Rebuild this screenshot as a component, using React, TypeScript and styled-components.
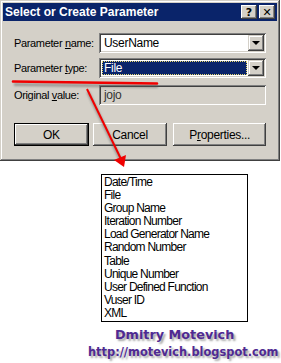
import React from "react";
import styled, { createGlobalStyle } from "styled-components";

const GlobalStyle = createGlobalStyle`
  html, body { margin: 0; padding: 0; background: #ffffff; }
  body { width: 281px; height: 363px; overflow: hidden; }
`;

const FONT = `"Liberation Sans", Arial, sans-serif`;

const Page = styled.div`
  position: relative;
  width: 281px;
  height: 363px;
  font-family: ${FONT};
`;

const Dialog = styled.div`
  box-sizing: border-box;
  width: 280px;
  height: 161px;
  padding: 3px;
  background: #d4d0c8;
  box-shadow: inset -1px -1px #404040, inset 1px 1px #d4d0c8,
    inset -2px -2px #808080, inset 2px 2px #ffffff;
`;

const TitleBar = styled.div`
  height: 18px;
  background: #0a246a;
  display: flex;
  align-items: center;
  justify-content: space-between;
  padding: 0 2px 0 2px;
`;

const Title = styled.span`
  color: #ffffff;
  font-family: ${FONT};
  font-weight: bold;
  font-size: 12px;
`;

const CaptionButtons = styled.div`
  display: flex;
  gap: 2px;
`;

const CaptionButton = styled.div`
  box-sizing: border-box;
  width: 16px;
  height: 14px;
  background: #d4d0c8;
  box-shadow: inset -1px -1px #404040, inset 1px 1px #ffffff,
    inset -2px -2px #808080;
  display: flex;
  align-items: center;
  justify-content: center;
  color: #000;
  font-family: "DejaVu Sans", sans-serif;
  font-weight: bold;
  font-size: 11px;
  line-height: 1;
`;

const Body = styled.div`
  padding: 12px 11px 0 11px;
  display: flex;
  flex-direction: column;
`;

const Row = styled.div<{ $mt: number }>`
  display: grid;
  grid-template-columns: 85px 167px;
  align-items: center;
  margin-top: ${(p) => p.$mt}px;
`;

const Label = styled.span`
  font-size: 11px;
  letter-spacing: -0.35px;
  color: #000;
`;

const Combo = styled.div`
  box-sizing: border-box;
  height: 20px;
  background: #ffffff;
  box-shadow: inset 1px 1px #808080, inset -1px -1px #ffffff,
    inset 2px 2px #404040, inset -2px -2px #d4d0c8;
  display: flex;
  align-items: stretch;
  padding: 2px;
`;

const ComboText = styled.div<{ $selected?: boolean }>`
  flex: 1;
  display: flex;
  align-items: center;
  margin: 1px 1px 1px 1px;
  padding-left: 2px;
  font-size: 12px;
  letter-spacing: -0.3px;
  color: ${(p) => (p.$selected ? "#ffffff" : "#000000")};
  background: ${(p) => (p.$selected ? "#0a246a" : "transparent")};
  outline: ${(p) => (p.$selected ? "1px dotted #e8d870" : "none")};
  outline-offset: -1px;
`;

const DropButton = styled.div`
  box-sizing: border-box;
  width: 16px;
  background: #d4d0c8;
  box-shadow: inset -1px -1px #404040, inset 1px 1px #d4d0c8,
    inset -2px -2px #808080, inset 2px 2px #ffffff;
  display: flex;
  align-items: center;
  justify-content: center;
`;

const Arrow = styled.div`
  width: 0;
  height: 0;
  border-left: 4px solid transparent;
  border-right: 4px solid transparent;
  border-top: 4px solid #000;
`;

const ReadOnly = styled.div`
  box-sizing: border-box;
  height: 20px;
  background: #d4d0c8;
  box-shadow: inset 1px 1px #808080, inset -1px -1px #ffffff,
    inset 2px 2px #404040, inset -2px -2px #d4d0c8;
  display: flex;
  align-items: center;
  padding-left: 5px;
  font-size: 12px;
  letter-spacing: -0.3px;
  color: #333;
`;

const Buttons = styled.div`
  display: flex;
  margin-top: 18px;
`;

const PushButton = styled.div<{ $w: number; $ml: number; $default?: boolean }>`
  box-sizing: border-box;
  width: ${(p) => p.$w}px;
  height: 23px;
  margin-left: ${(p) => p.$ml}px;
  background: #d4d0c8;
  box-shadow: ${(p) =>
    p.$default
      ? "inset 0 0 0 1px #000, inset -2px -2px #404040, inset 2px 2px #ffffff, inset -3px -3px #808080"
      : "inset -1px -1px #404040, inset 1px 1px #ffffff, inset -2px -2px #808080"};
  display: flex;
  align-items: center;
  justify-content: center;
  font-size: 12px;
  letter-spacing: -0.3px;
  color: #000;
`;

const ListBox = styled.div`
  box-sizing: border-box;
  width: 147px;
  height: 148px;
  margin: 13px 0 0 101px;
  border: 1px solid #000;
  padding: 1px 0 0 2px;
  display: flex;
  flex-direction: column;
`;

const ListItem = styled.div`
  font-size: 12px;
  line-height: 13.1px;
  letter-spacing: -0.75px;
  color: #000;
  white-space: nowrap;
`;

const Footer = styled.div`
  display: flex;
  flex-direction: column;
  align-items: flex-start;
  margin-top: 4px;
`;

const FooterLine = styled.div<{ $ml: number; $size: number; $lh: number }>`
  margin-left: ${(p) => p.$ml}px;
  font-family: "DejaVu Sans", Verdana, sans-serif;
  font-weight: bold;
  font-size: ${(p) => p.$size}px;
  line-height: ${(p) => p.$lh}px;
  color: #4f2a92;
  white-space: nowrap;
  text-shadow: 2px 2px 2px rgba(90, 90, 90, 0.55);
`;

const Overlay = styled.svg`
  position: absolute;
  left: 0;
  top: 0;
  pointer-events: none;
`;

const items = [
  "Date/Time",
  "File",
  "Group Name",
  "Iteration Number",
  "Load Generator Name",
  "Random Number",
  "Table",
  "Unique Number",
  "User Defined Function",
  "Vuser ID",
  "XML",
];

export default function App() {
  return (
    <Page>
      <GlobalStyle />
      <Dialog>
        <TitleBar>
          <Title>Select or Create Parameter</Title>
          <CaptionButtons>
            <CaptionButton>?</CaptionButton>
            <CaptionButton>✕</CaptionButton>
          </CaptionButtons>
        </TitleBar>
        <Body>
          <Row $mt={0}>
            <Label>
              Parameter <u>n</u>ame:
            </Label>
            <Combo>
              <ComboText>UserName</ComboText>
              <DropButton>
                <Arrow />
              </DropButton>
            </Combo>
          </Row>
          <Row $mt={5}>
            <Label>
              Parameter <u>t</u>ype:
            </Label>
            <Combo>
              <ComboText $selected>File</ComboText>
              <DropButton>
                <Arrow />
              </DropButton>
            </Combo>
          </Row>
          <Row $mt={7}>
            <Label>
              Original <u>v</u>alue:
            </Label>
            <ReadOnly>jojo</ReadOnly>
          </Row>
          <Buttons>
            <PushButton $w={75} $ml={0} $default>
              OK
            </PushButton>
            <PushButton $w={75} $ml={4}>
              Cancel
            </PushButton>
            <PushButton $w={93} $ml={6}>
              P<u>r</u>operties...
            </PushButton>
          </Buttons>
        </Body>
      </Dialog>
      <ListBox>
        {items.map((it) => (
          <ListItem key={it}>{it}</ListItem>
        ))}
      </ListBox>
      <Footer>
        <FooterLine $ml={115} $size={12.8} $lh={17}>
          Dmitry Motevich
        </FooterLine>
        <FooterLine $ml={88} $size={11.4} $lh={18}>
          http://motevich.blogspot.com
        </FooterLine>
      </Footer>
      <Overlay width="281" height="363" viewBox="0 0 281 363">
        <defs>
          <filter id="sh" x="-20%" y="-20%" width="140%" height="160%">
            <feGaussianBlur stdDeviation="1.2" />
          </filter>
        </defs>
        <g opacity="0.45" filter="url(#sh)" transform="translate(1,3)">
          <path d="M13 81.5 L157 83.5" stroke="#555" strokeWidth="3" fill="none" />
          <path d="M87 89 L121 160" stroke="#555" strokeWidth="3" fill="none" />
        </g>
        <path d="M13 81.5 L157 83.5" stroke="#f00000" strokeWidth="2.6" fill="none" strokeLinecap="round" />
        <path d="M87 89 L121 159" stroke="#f00000" strokeWidth="2" fill="none" />
        <path d="M124 167 L114 160 L126 155 Z" fill="#f00000" />
      </Overlay>
    </Page>
  );
}
